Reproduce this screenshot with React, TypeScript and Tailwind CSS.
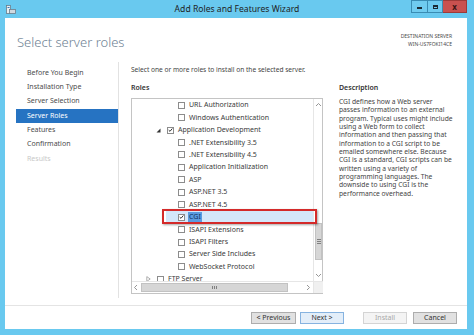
import React from "react";

type Row = { l: 1 | 2 | 3; t: string; exp?: "open" | "closed"; c?: boolean; sel?: boolean };

const rows: Row[] = [
  { l: 3, t: "URL Authorization" },
  { l: 3, t: "Windows Authentication" },
  { l: 2, t: "Application Development", exp: "open", c: true },
  { l: 3, t: ".NET Extensibility 3.5" },
  { l: 3, t: ".NET Extensibility 4.5" },
  { l: 3, t: "Application Initialization" },
  { l: 3, t: "ASP" },
  { l: 3, t: "ASP.NET 3.5" },
  { l: 3, t: "ASP.NET 4.5" },
  { l: 3, t: "CGI", c: true, sel: true },
  { l: 3, t: "ISAPI Extensions" },
  { l: 3, t: "ISAPI Filters" },
  { l: 3, t: "Server Side Includes" },
  { l: 3, t: "WebSocket Protocol" },
  { l: 1, t: "FTP Server", exp: "closed" },
];

const padByLevel: Record<number, string> = { 1: "pl-[13px]", 2: "pl-[23px]", 3: "pl-[34px]" };

function Check({ checked }: { checked?: boolean }) {
  return (
    <span className="w-[7px] h-[7px] border border-[#8c8c8c] bg-white flex items-center justify-center shrink-0">
      {checked && (
        <svg width="6" height="6" viewBox="0 0 6 6">
          <path d="M0.8 3.1 L2.4 4.6 L5.2 1.2" stroke="#222" strokeWidth="1.1" fill="none" />
        </svg>
      )}
    </span>
  );
}

function Expander({ kind }: { kind?: "open" | "closed" }) {
  return (
    <span className="w-[12px] h-full flex items-center shrink-0">
      {kind === "open" && (
        <svg width="5" height="5" viewBox="0 0 5 5" className="ml-[1px]">
          <path d="M4.5 0.5 L4.5 4.5 L0.5 4.5 Z" fill="#333" />
        </svg>
      )}
      {kind === "closed" && (
        <svg width="5" height="6" viewBox="0 0 5 6" className="ml-[1px]">
          <path d="M0.8 0.6 L4.2 3 L0.8 5.4 Z" fill="none" stroke="#9a9a9a" strokeWidth="0.8" />
        </svg>
      )}
    </span>
  );
}

function Chevron({ dir }: { dir: "up" | "down" | "left" | "right" }) {
  const d = {
    up: "M1 4 L3.5 1.5 L6 4",
    down: "M1 2 L3.5 4.5 L6 2",
    left: "M4 1 L1.5 3.5 L4 6",
    right: "M2 1 L4.5 3.5 L2 6",
  }[dir];
  return (
    <svg width="7" height="7" viewBox="0 0 7 7">
      <path d={d} stroke="#8a8a8a" strokeWidth="0.9" fill="none" />
    </svg>
  );
}

export default function App() {
  const font = { fontFamily: '"Noto Sans", "Open Sans", sans-serif' };
  return (
    <div className="w-[474px] h-[335px] bg-[#69c9ef] flex flex-col overflow-hidden" style={font}>
      {/* Title bar */}
      <div className="h-[18px] relative flex items-center justify-center shrink-0">
        <svg width="10" height="9" viewBox="0 0 10 9" className="absolute left-[6px] top-[5px]">
          <rect x="0.5" y="0.5" width="4" height="8" fill="#e8eef2" stroke="#6a7d8a" strokeWidth="0.8" />
          <rect x="3.5" y="4.5" width="6" height="4" fill="#cfd9e0" stroke="#6a7d8a" strokeWidth="0.8" />
          <rect x="1.5" y="2" width="2" height="1" fill="#3a78b8" />
        </svg>
        <span className="text-[8.6px] text-[#1e1e1e] leading-none">Add Roles and Features Wizard</span>
        <div className="absolute right-[7px] top-0 flex h-[13px]">
          <div className="w-[17px] h-full border border-[#3a8cb3] bg-[#6fcbef] flex items-center justify-center">
            <span className="w-[5px] h-[2px] bg-[#1c2a33] mt-[3px]" />
          </div>
          <div className="w-[15px] h-full border-y border-r border-[#3a8cb3] bg-[#6fcbef] flex items-center justify-center">
            <span className="w-[5px] h-[4px] border border-[#1c2a33] border-t-2" />
          </div>
          <div className="w-[24px] h-full bg-[#c9514f] border-y border-r border-[#9e3a38] flex items-center justify-center">
            <span className="text-[8px] font-bold text-[#3a1414] leading-none">x</span>
          </div>
        </div>
      </div>

      {/* Body */}
      <div className="ml-[5px] mr-[7px] h-[311px] bg-white flex flex-col shrink-0">
        {/* Header */}
        <div className="h-[42px] relative shrink-0">
          <div className="pl-[12px] pt-[15px] text-[13px] leading-[18px] font-light text-[#6e8294]">Select server roles</div>
          <div className="absolute right-[15px] top-[14px] text-right text-[5px] leading-[8px] text-[#4a4a4a]">
            <div>DESTINATION SERVER</div>
            <div>WIN-US7FOKI14CE</div>
          </div>
        </div>

        {/* Main */}
        <div className="h-[245px] flex shrink-0">
          <div className="ml-[11px] w-[102px] pt-[6px] text-[7px] text-[#4b4b4b]">
            {[
              "Before You Begin",
              "Installation Type",
              "Server Selection",
              "Server Roles",
              "Features",
              "Confirmation",
              "Results",
            ].map((s) => (
              <div
                key={s}
                className={
                  "h-[14.3px] flex items-center pl-[11px] " +
                  (s === "Server Roles"
                    ? "bg-[#2673c2] text-white"
                    : s === "Results"
                    ? "text-[#c8c8c8]"
                    : "")
                }
              >
                {s}
              </div>
            ))}
          </div>
          <div className="w-px bg-[#e2e2e2] mt-[2px] mb-[7px]" />

          <div className="flex flex-col pl-[12px] pt-[5px]">
            <div className="h-[10px] leading-[10px] text-[6.6px] text-[#444]">
              Select one or more roles to install on the selected server.
            </div>
            <div className="flex mt-[8px]">
              <div className="w-[192px]">
                <div className="h-[10px] leading-[10px] text-[7px] font-semibold text-[#333]">Roles</div>
                <div className="mt-[5px] h-[196px] border border-[#c4c4c4] relative grid grid-cols-[181px_10px] grid-rows-[182px_12px]">
                  {/* tree */}
                  <div className="overflow-hidden text-[7px] text-[#3a3a3a]">
                    {rows.map((r) => (
                      <div key={r.t} className={"h-[12.45px] flex " + padByLevel[r.l]}>
                        <div className={"flex-1 flex items-center " + (r.sel ? "bg-[#d4e7fa]" : "")}>
                          <Expander kind={r.exp} />
                          <Check checked={r.c} />
                          <span
                            className={
                              "leading-[10px] whitespace-nowrap " +
                              (r.sel ? "ml-[3px] bg-[#5b9be0] text-[#0e2f5e] px-[1px]" : "ml-[4px]")
                            }
                          >
                            {r.t}
                          </span>
                        </div>
                      </div>
                    ))}
                  </div>
                  {/* vertical scrollbar */}
                  <div className="row-span-1 border-l border-[#e6e6e6] flex flex-col items-center">
                    <div className="h-[12px] flex items-center justify-center">
                      <Chevron dir="up" />
                    </div>
                    <div className="flex-1 w-full relative">
                      <div className="absolute left-[1px] right-[1px] top-[112px] h-[37px] bg-[#d6d6d6] border border-[#c2c2c2] flex flex-col items-center justify-center gap-[1px]">
                        <span className="w-[4px] h-px bg-[#808080]" />
                        <span className="w-[4px] h-px bg-[#808080]" />
                        <span className="w-[4px] h-px bg-[#808080]" />
                      </div>
                    </div>
                    <div className="h-[12px] flex items-center justify-center">
                      <Chevron dir="down" />
                    </div>
                  </div>
                  {/* horizontal scrollbar */}
                  <div className="border-t border-[#e6e6e6] flex items-center">
                    <div className="w-[9px] flex justify-center">
                      <Chevron dir="left" />
                    </div>
                    <div className="w-[147px] h-[9px] bg-[#d6d6d6] border border-[#c2c2c2] flex items-center justify-center gap-[1px]">
                      <span className="w-px h-[3px] bg-[#808080]" />
                      <span className="w-px h-[3px] bg-[#808080]" />
                      <span className="w-px h-[3px] bg-[#808080]" />
                    </div>
                    <div className="flex-1" />
                    <div className="w-[9px] flex justify-center">
                      <Chevron dir="right" />
                    </div>
                  </div>
                  <div className="bg-[#f0f0f0] border-t border-l border-[#e6e6e6]" />

                  {/* red annotation box */}
                  <div className="absolute left-[30px] top-[110px] w-[155px] h-[15px] border-2 border-[#d42a2a] shadow-[1px_1px_2px_rgba(0,0,0,0.35)]" />
                </div>
              </div>
              <div className="ml-[16px] w-[122px]">
                <div className="h-[10px] leading-[10px] text-[7px] font-semibold text-[#333]">Description</div>
                <div className="mt-[5px] text-[6.7px] leading-[8.35px] text-[#444] whitespace-nowrap">
                  <div>CGI defines how a Web server</div>
                  <div>passes information to an external</div>
                  <div>program. Typical uses might include</div>
                  <div>using a Web form to collect</div>
                  <div>information and then passing that</div>
                  <div>information to a CGI script to be</div>
                  <div>emailed somewhere else. Because</div>
                  <div>CGI is a standard, CGI scripts can be</div>
                  <div>written using a variety of</div>
                  <div>programming languages. The</div>
                  <div>downside to using CGI is the</div>
                  <div>performance overhead.</div>
                </div>
              </div>
            </div>
          </div>
        </div>

        {/* Footer */}
        <div className="h-[24px] border-t border-[#e4e4e4] flex justify-end items-start pt-[6px] pr-[10px] text-[7px] shrink-0">
          <div className="w-[45px] h-[12px] bg-[#e1e1e1] border border-[#adadad] flex items-center justify-center text-[#333]">
            &lt; Previous
          </div>
          <div className="ml-[4px] w-[44px] h-[12px] bg-[#e3eef9] border border-[#86b3e0] flex items-center justify-center text-[#333]">
            Next &gt;
          </div>
          <div className="ml-[19px] w-[44px] h-[12px] bg-[#f4f4f4] border border-[#d4d4d4] flex items-center justify-center text-[#a8a8a8]">
            Install
          </div>
          <div className="ml-[6px] w-[44px] h-[12px] bg-[#e1e1e1] border border-[#adadad] flex items-center justify-center text-[#333]">
            Cancel
          </div>
        </div>
      </div>
    </div>
  );
}
